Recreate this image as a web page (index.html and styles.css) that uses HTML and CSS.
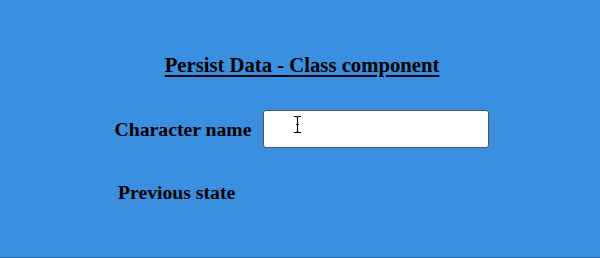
FILE: index.html
```html
<!DOCTYPE html>
<html>
<head>
<meta charset="utf-8">
<link rel="stylesheet" href="styles.css">
</head>
<body>
<div class="app">
  <h2 class="title">Persist Data - Class component</h2>
  <div class="row">
    <label class="label">Character name</label>
    <div class="field">
      <input class="input" type="text">
      <svg class="cursor" width="9" height="19" viewBox="0 0 9 19">
        <path d="M1 1.5 H3 Q4.5 1.5 4.5 3 V16 Q4.5 17.5 3 17.5 H1 M8 1.5 H6 Q4.5 1.5 4.5 3 V16 Q4.5 17.5 6 17.5 H8 M3 9.5 H6" fill="none" stroke="#fff" stroke-width="2.6"/>
        <path d="M1 1.5 H3 Q4.5 1.5 4.5 3 V16 Q4.5 17.5 3 17.5 H1 M8 1.5 H6 Q4.5 1.5 4.5 3 V16 Q4.5 17.5 6 17.5 H8 M3 9.5 H6" fill="none" stroke="#000" stroke-width="1.1"/>
      </svg>
    </div>
  </div>
  <div class="prev">Previous state</div>
</div>
</body>
</html>
```
FILE: styles.css
```css
html, body {
  margin: 0;
  padding: 0;
}
body {
  background: #3a8fe0;
  font-family: "Liberation Serif", "Times New Roman", serif;
  color: #000;
}
.app {
  height: 257px;
  padding-left: 4px;
  border-bottom: 1px solid #2466a8;
  display: flex;
  flex-direction: column;
  align-items: center;
}
.title {
  margin: 53px 0 0;
  font-size: 20.7px;
  line-height: 24px;
  font-weight: bold;
  text-decoration: underline;
  text-decoration-thickness: 2px;
  text-underline-offset: 3px;
}
.row {
  margin-top: 33px;
  display: flex;
  align-items: center;
  gap: 12px;
}
.label {
  font-size: 19.7px;
  font-weight: bold;
}
.field {
  position: relative;
}
.input {
  display: block;
  box-sizing: border-box;
  width: 226px;
  height: 38px;
  margin: 0;
  background: #fff;
  border: 1px solid #4e5560;
  border-radius: 3px;
  outline: none;
}
.cursor {
  position: absolute;
  left: 30px;
  top: 5px;
}
.prev {
  align-self: flex-start;
  margin: 33px 0 0 114px;
  font-size: 19.7px;
  font-weight: bold;
}
```
